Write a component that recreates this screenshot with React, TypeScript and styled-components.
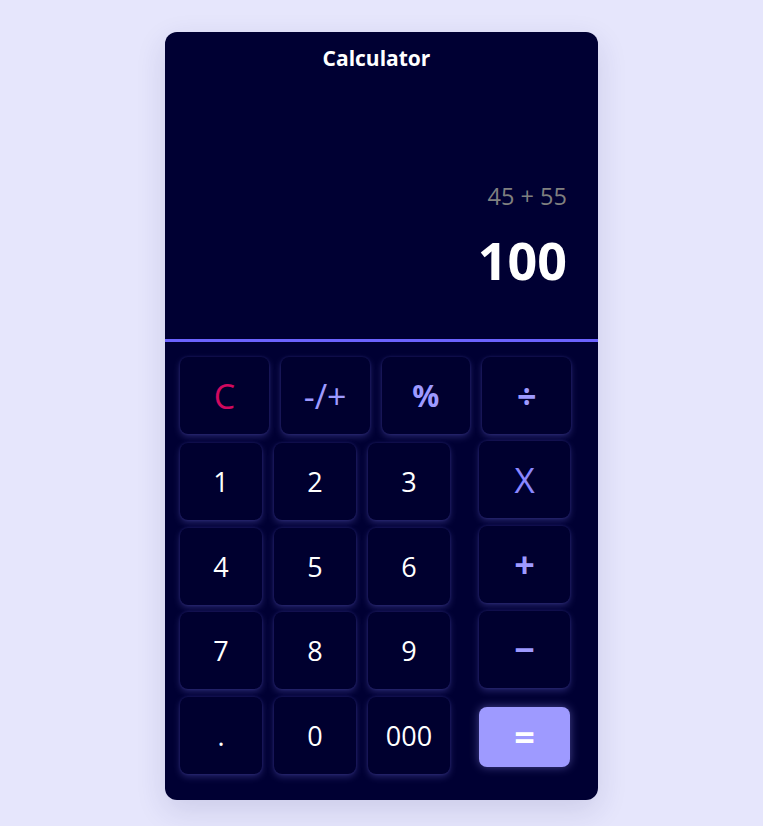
import styled, { createGlobalStyle } from 'styled-components'

const GlobalStyle = createGlobalStyle`
  * { box-sizing: border-box; }
  body {
    margin: 0;
    background: #e6e6fc;
    font-family: "Open Sans", "Noto Sans", sans-serif;
  }
`

const S_page = styled.div`
  display: flex;
  justify-content: center;
  padding-top: 32px;
  min-height: 826px;
`

const S_card = styled.div`
  width: 433px;
  height: 768px;
  background: #000033;
  border-radius: 12px;
  box-shadow: 0 10px 30px rgba(40, 40, 110, 0.14);
  display: flex;
  flex-direction: column;
  overflow: hidden;
`

const S_title = styled.h1`
  margin: 0;
  padding: 12px 10px 0 0;
  height: 40px;
  font-size: 21px;
  line-height: 28px;
  font-weight: 700;
  color: #ffffff;
  text-align: center;
`

const S_display = styled.div`
  height: 270px;
  display: flex;
  flex-direction: column;
  justify-content: flex-end;
  align-items: flex-end;
  gap: 17px;
  padding: 0 31px 48px 0;
  border-bottom: 3px solid #6c63ff;
`

const S_expr = styled.div`
  font-size: 23.5px;
  line-height: 32px;
  color: #808080;
`

const S_result = styled.div`
  font-size: 52px;
  line-height: 62px;
  font-weight: 700;
  color: #ffffff;
`

const S_keypad = styled.div`
  display: flex;
  flex-direction: column;
  gap: 9px;
  padding: 15px 27px 0 15px;
`

const S_topRow = styled.div`
  display: grid;
  grid-template-columns: repeat(4, 1fr);
  gap: 12px;
`

const S_lower = styled.div`
  display: flex;
  align-items: flex-start;
`

const S_digits = styled.div`
  display: grid;
  grid-template-columns: repeat(3, 82px);
  grid-auto-rows: 77px;
  column-gap: 12px;
  row-gap: 7.5px;
`

const S_ops = styled.div`
  width: 91px;
  margin-left: 29px;
  margin-top: -2px;
  display: flex;
  flex-direction: column;
  gap: 8px;
`

type KeyProps = { $color?: string; $size?: number; $weight?: number }

const S_key = styled.button<KeyProps>`
  height: 77px;
  border: none;
  border-radius: 8px;
  background: #00002f;
  box-shadow: 0 3px 7px rgba(120, 115, 230, 0.3), 0 0 3px rgba(120, 115, 230, 0.22);
  color: ${({ $color }) => $color || '#ffffff'};
  font-family: "Open Sans", "Noto Sans", sans-serif;
  font-size: ${({ $size }) => $size || 27}px;
  font-weight: ${({ $weight }) => $weight || 400};
  line-height: 1;
  padding: 0;
  display: flex;
  align-items: center;
  justify-content: center;
  cursor: pointer;
`

const S_equal = styled(S_key)`
  height: 60px;
  margin-top: 11px;
  background: #9e9aff;
  box-shadow: 0 0 10px rgba(158, 154, 255, 0.45);
`

const OP = '#9e9aff'
const digits = ['1', '2', '3', '4', '5', '6', '7', '8', '9', '.', '0', '000']

const App = () => {
  return (
    <>
      <GlobalStyle />
      <S_page>
        <S_card>
          <S_title>Calculator</S_title>
          <S_display>
            <S_expr>45 + 55</S_expr>
            <S_result>100</S_result>
          </S_display>

          <S_keypad>
            <S_topRow>
              <S_key $color="#d1095f" $size={34}>C</S_key>
              <S_key $color={OP} $size={34}>-/+</S_key>
              <S_key $color={OP} $size={30} $weight={700}>%</S_key>
              <S_key $color={OP} $size={34} $weight={700}>÷</S_key>
            </S_topRow>

            <S_lower>
              <S_digits>
                {digits.map((d) => (
                  <S_key key={d}>{d}</S_key>
                ))}
              </S_digits>
              <S_ops>
                <S_key $color="#8b87ff" $size={35}>X</S_key>
                <S_key $color={OP} $size={36} $weight={700}>+</S_key>
                <S_key $color={OP} $size={36} $weight={700}>−</S_key>
                <S_equal $size={36} $weight={700}>=</S_equal>
              </S_ops>
            </S_lower>
          </S_keypad>
        </S_card>
      </S_page>
    </>
  )
}

export default App
